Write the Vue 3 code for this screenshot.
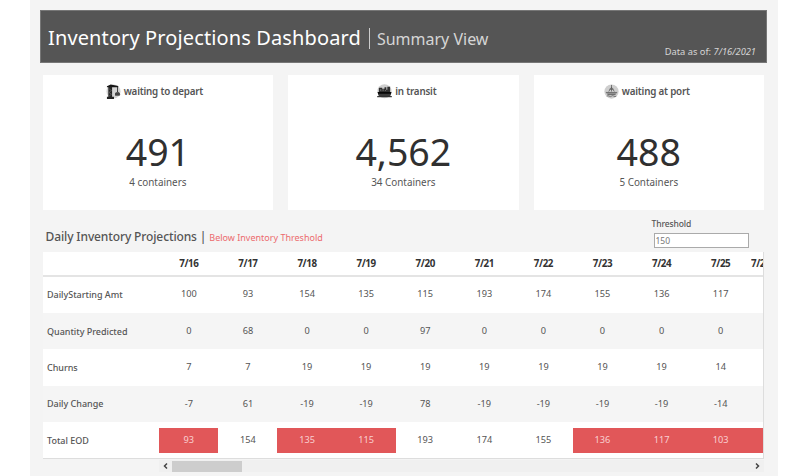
<template>
  <main class="dashboard">
    <header class="banner">
      <h1>
        <span class="title">Inventory Projections Dashboard</span>
        <span class="divider"></span>
        <span class="view">Summary View</span>
      </h1>
      <p class="as-of">Data as of: <em>7/16/2021</em></p>
    </header>

    <section class="cards">
      <article v-for="card in cards" :key="card.label" class="card">
        <h2 :class="card.icon">
          <svg v-if="card.icon === 'crane'" class="icon" viewBox="0 0 16 16">
            <circle cx="8" cy="8" r="7.5" fill="#d4d4d4" />
            <path d="M1 2.5 5 .5 13 2.2v1.3H1z" fill="#151515" />
            <path d="M2.5 3h4v11h-4zM1 13.7h7.5V16H1z" fill="#242424" />
            <path d="m3.2 5 2.6 2-2.6 2 2.6 2-2.6 2" fill="none" stroke="#888" stroke-width=".5" />
            <path d="M12.3 3v6M10 11.5 12.3 8l2.5 3.5" fill="none" stroke="#333" />
            <path d="M9.7 9.3h5v3.2h-5z" fill="#444" />
          </svg>
          <svg v-else-if="card.icon === 'ship'" class="icon" viewBox="0 0 16 16">
            <circle cx="8" cy="7.8" r="7.5" fill="#cfcfcf" />
            <path d="M2 4h3.5v1H8V3.5h2V6h1V3h3v6H2z" fill="#303030" />
            <path d="M.5 8.5h15l-1.2 4H1.8z" fill="#080808" />
            <path d="M1.5 11h13" stroke="#777" stroke-width=".6" />
            <path d="M.2 13.5h15.6" stroke="#222" stroke-width="1.2" />
            <path d="M4 5.5v2m2.5-2v2m2.5-1v1" stroke="#aaa" stroke-width=".6" />
          </svg>
          <svg v-else class="icon" viewBox="0 0 16 16">
            <circle cx="8" cy="8" r="7.6" fill="#cecece" />
            <path d="M8 1v7M5.8 5.5h4.4M5 8l3-4.5L11 8" fill="none" stroke="#555" stroke-width=".8" />
            <path d="M2 9h12l-1.8 3H3.8z" fill="#999" />
            <path d="M2 9h12M4 11h8M3 13q1.2-1 2.5 0t2.5 0 2.5 0 2.5 0" fill="none" stroke="#4c4c4c" stroke-width=".7" />
          </svg>
          <span>{{ card.label }}</span>
        </h2>
        <strong>{{ card.total }}</strong>
        <p>{{ card.note }}</p>
      </article>
    </section>

    <section class="toolbar">
      <h3>
        <span>Daily Inventory Projections |</span>
        <small>Below Inventory Threshold</small>
      </h3>
      <label class="threshold">
        <span>Threshold</span>
        <input v-model="threshold" type="text">
      </label>
    </section>

    <section class="grid">
      <div class="row head">
        <span class="name"></span>
        <span v-for="d in dates" :key="d" class="cell">{{ d }}</span>
        <span class="cell partial">7/26</span>
      </div>
      <div v-for="row in rows" :key="row.name" class="row">
        <span class="name">{{ row.name }}</span>
        <span
          v-for="(v, i) in row.values"
          :key="i"
          class="cell"
          :class="{ below: row.total && v < threshold }"
        >{{ v }}</span>
        <span class="cell partial" :class="{ below: row.total }"></span>
      </div>
    </section>

    <div class="scrollbar">
      <svg viewBox="0 0 12 12"><path d="M7.5 3.5 5 6l2.5 2.5" /></svg>
      <span class="thumb"></span>
      <svg viewBox="0 0 12 12"><path d="M4.5 3.5 7 6 4.5 8.5" /></svg>
    </div>
  </main>
</template>

<script setup>
import { ref } from 'vue'

const threshold = ref(150)

const cards = [
  { icon: 'crane', label: 'waiting to depart', total: '491', note: '4 containers' },
  { icon: 'ship', label: 'in transit', total: '4,562', note: '34 Containers' },
  { icon: 'port', label: 'waiting at port', total: '488', note: '5 Containers' }
]

const dates = ['7/16', '7/17', '7/18', '7/19', '7/20', '7/21', '7/22', '7/23', '7/24', '7/25']

const rows = [
  { name: 'DailyStarting Amt', values: [100, 93, 154, 135, 115, 193, 174, 155, 136, 117] },
  { name: 'Quantity Predicted', values: [0, 68, 0, 0, 97, 0, 0, 0, 0, 0] },
  { name: 'Churns', values: [7, 7, 19, 19, 19, 19, 19, 19, 19, 14] },
  { name: 'Daily Change', values: [-7, 61, -19, -19, 78, -19, -19, -19, -19, -14] },
  { name: 'Total EOD', total: true, values: [93, 154, 135, 115, 193, 174, 155, 136, 117, 103] }
]
</script>

<style>
body {
  background: #fff;
  overflow: hidden;
}
</style>

<style scoped>
* {
  box-sizing: border-box;
  margin: 0;
}

.dashboard {
  width: 748px;
  height: 476px;
  margin-left: 29.5px;
  padding: 10px 10.5px 0 10px;
  background: #f4f4f4;
  color: #555;
  font-family: "Noto Sans", sans-serif;
  overflow: hidden;
}

.banner {
  display: flex;
  justify-content: space-between;
  height: 53px;
  padding: 0 10px 0 7.5px;
  background: #555;
  border: 1px solid #777;
  color: #fff;
}

h1 {
  display: flex;
  align-items: baseline;
  padding-top: 13px;
  font-weight: 400;
  line-height: 28px;
  white-space: nowrap;
}

.title {
  font-size: 20px;
  letter-spacing: 0.12px;
}

.divider {
  align-self: flex-start;
  width: 1px;
  height: 21px;
  margin: 4px 7px 0 8px;
  background: #ccc;
}

.view {
  color: #d5d5d5;
  font-size: 16px;
}

.as-of {
  align-self: flex-end;
  padding-bottom: 3px;
  color: #d5d5d5;
  font-size: 9.3px;
  line-height: 14px;
  white-space: nowrap;
}

.cards {
  display: flex;
  gap: 15px;
  margin: 12px 3px 0 3.2px;
}

.card {
  flex: 1;
  height: 135px;
  background: #fff;
  text-align: center;
}

h2 {
  display: flex;
  align-items: center;
  justify-content: center;
  gap: 3px;
  height: 15px;
  margin-top: 9px;
  font-size: 9.8px;
  font-weight: 600;
  letter-spacing: -0.2px;
  white-space: nowrap;
}

h2.crane {
  padding-right: 7px;
}

h2.ship {
  padding-left: 7px;
}

h2.port {
  padding-right: 4px;
}

.icon {
  width: 15px;
  height: 15px;
}

.card strong {
  display: block;
  margin-top: 27px;
  color: #303030;
  font-size: 37.5px;
  font-weight: 400;
  line-height: 51px;
}

.card p {
  margin-top: -2px;
  font-size: 9.9px;
  line-height: 14px;
}

.toolbar {
  display: flex;
  justify-content: space-between;
  height: 42px;
  padding: 0 18.5px 0 6px;
}

h3 {
  display: flex;
  align-items: baseline;
  gap: 3px;
  padding-top: 18px;
  font-size: 12px;
  font-weight: 500;
  letter-spacing: -0.12px;
  line-height: 18px;
  white-space: nowrap;
}

h3 small {
  color: #ec6b6e;
  font-size: 9px;
  font-weight: 400;
  letter-spacing: 0;
}

.threshold {
  display: flex;
  flex-direction: column;
  width: 97px;
  padding-top: 7px;
  font-size: 8.5px;
  line-height: 13px;
}

.threshold span {
  font-weight: 500;
  letter-spacing: -0.1px;
}

.threshold input {
  width: 95px;
  height: 15px;
  margin: 3px 0 0 2px;
  padding: 0 1px;
  border: 1px solid #aaa;
  border-radius: 0;
  background: #fff;
  color: #777;
  font: 8.5px "Noto Sans", sans-serif;
}

.grid {
  width: 721px;
  height: 207px;
  margin-left: 3.5px;
  border-right: 1px solid #ddd;
  border-bottom: 1px solid #ddd;
  background: #fff;
  overflow: hidden;
}

.row {
  display: flex;
  align-items: center;
  height: 36.4px;
}

.row:nth-child(odd):not(.head) {
  background: #f5f5f5;
}

.head {
  height: 24.5px;
  border-bottom: 2px solid #e4e4e4;
  color: #333;
  font-weight: 700;
}

.name {
  flex: 0 0 116.3px;
  padding-left: 4px;
  font-size: 9px;
  font-weight: 500;
  letter-spacing: -0.02px;
  white-space: nowrap;
}

.cell {
  flex: 0 0 59.1px;
  height: 24.5px;
  font-size: 9.2px;
  line-height: 24.5px;
  text-align: center;
}

.partial {
  flex: 1 0 0;
  min-width: 0;
  overflow: hidden;
  text-align: left;
}

.head .partial {
  flex: 0 0 12px;
  margin-left: auto;
}

.head .cell {
  padding-top: 1px;
  font-size: 9.8px;
  letter-spacing: -0.4px;
}

.below {
  background: #e15759;
  color: #f9cfd0;
}

.scrollbar {
  display: flex;
  align-items: center;
  width: 605px;
  height: 12px;
  margin: 1px 0 0 119.5px;
  background: #f0f0f0;
}

.scrollbar svg {
  width: 13px;
  height: 12px;
  fill: none;
  stroke: #444;
  stroke-width: 1.5;
}

.scrollbar svg:last-child {
  margin-left: auto;
}

.thumb {
  width: 70px;
  height: 11px;
  background: #cdcdcd;
}
</style>
